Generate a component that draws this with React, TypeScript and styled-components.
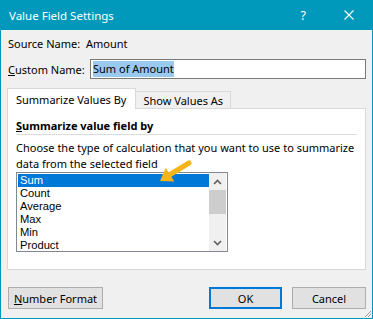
import React from 'react';
import styled, { createGlobalStyle } from 'styled-components';

const items = ['Sum', 'Count', 'Average', 'Max', 'Min', 'Product'];

export default function App() {
  return (
    <>
      <GlobalStyle />
      <Window>
        <TitleBar>
          <Title>Value Field Settings</Title>
          <TitleButtons>
            <TitleGlyph>?</TitleGlyph>
            <svg width="10" height="10" viewBox="0 0 10 10">
              <path d="M0.5 0.5L9.5 9.5M9.5 0.5L0.5 9.5" stroke="#fff" strokeWidth="1.1" />
            </svg>
          </TitleButtons>
        </TitleBar>

        <Body>
          <SourceRow>
            <Label>Source Name:</Label>
            <span>Amount</span>
          </SourceRow>

          <NameRow>
            <NameLabel>
              <u>C</u>ustom Name:
            </NameLabel>
            <NameInput>
              <Selected>Sum of Amount</Selected>
            </NameInput>
          </NameRow>

          <Tabs>
            <Tab active>Summarize Values By</Tab>
            <Tab>Show Values As</Tab>
          </Tabs>

          <Panel>
            <SectionTitle>
              <u>S</u>ummarize value field by
            </SectionTitle>
            <Hint>
              Choose the type of calculation that you want to use to summarize
              <br />
              data from the selected field
            </Hint>
            <ListBox>
              <Rows>
                {items.map((item, i) => (
                  <Row key={item} selected={i === 0}>
                    {item}
                  </Row>
                ))}
              </Rows>
              <ScrollBar>
                <ScrollArrow>
                  <svg width="9" height="6" viewBox="0 0 9 6">
                    <path d="M1 5L4.5 1.5L8 5" stroke="#606060" strokeWidth="1.6" fill="none" />
                  </svg>
                </ScrollArrow>
                <Thumb />
                <ScrollSpace />
                <ScrollArrow>
                  <svg width="9" height="6" viewBox="0 0 9 6">
                    <path d="M1 1L4.5 4.5L8 1" stroke="#606060" strokeWidth="1.6" fill="none" />
                  </svg>
                </ScrollArrow>
              </ScrollBar>
            </ListBox>
          </Panel>

          <Footer>
            <Button width={95}>
              <u>N</u>umber Format
            </Button>
            <RightButtons>
              <Button width={73} primary>
                OK
              </Button>
              <Button width={74}>Cancel</Button>
            </RightButtons>
          </Footer>
        </Body>

        {/* callout arrow pointing at "Sum" */}
        <Callout width="373" height="319" viewBox="0 0 373 319">
          <line x1="189" y1="163" x2="170" y2="174.5" stroke="#F5B417" strokeWidth="5" strokeLinecap="round" />
          <polygon points="160,181 165.7,167.8 174.3,181.4" fill="#F5B417" />
        </Callout>

        <Grip width="10" height="10" viewBox="0 0 10 10">
          <path d="M9 3L3 9M9 6L6 9" stroke="#A0A0A0" strokeWidth="1" />
        </Grip>
      </Window>
    </>
  );
}

const GlobalStyle = createGlobalStyle`
  body {
    margin: 0;
    font-family: 'Noto Sans', 'Open Sans', sans-serif;
    font-size: 11px;
    color: #000;
    white-space: nowrap;
  }
`;

const Window = styled.div`
  position: relative;
  width: 373px;
  height: 319px;
  box-sizing: border-box;
  border: 1px solid #0099bc;
  border-top: none;
  background: #f0f0f0;
  display: flex;
  flex-direction: column;
`;

const TitleBar = styled.div`
  height: 30px;
  margin: 0 -1px;
  background: #0099bc;
  color: #fff;
  display: flex;
  align-items: center;
  justify-content: space-between;
  padding: 0 19px 0 9px;
  flex-shrink: 0;
`;

const Title = styled.div`
  font-size: 11.5px;
`;

const TitleButtons = styled.div`
  display: flex;
  align-items: center;
  gap: 38px;
`;

const TitleGlyph = styled.span`
  font-size: 12.5px;
`;

const Body = styled.div`
  flex: 1;
  padding: 6px 6px 0 6px;
  display: flex;
  flex-direction: column;
`;

const SourceRow = styled.div`
  display: flex;
  height: 16px;
  line-height: 16px;
  padding-left: 1px;
`;

const Label = styled.span`
  width: 78px;
  flex-shrink: 0;
`;

const NameRow = styled.div`
  display: flex;
  align-items: center;
  margin-top: 7px;
  height: 20px;
  padding-left: 1px;
`;

const NameLabel = styled.span`
  width: 82px;
  flex-shrink: 0;
`;

const NameInput = styled.div`
  flex: 1;
  height: 20px;
  box-sizing: border-box;
  border: 1px solid #7a7a7a;
  background: #fff;
  display: flex;
  align-items: center;
  padding-left: 2px;
`;

const Selected = styled.span`
  background: #99c9ef;
  line-height: 16px;
`;

const Tabs = styled.div`
  display: flex;
  align-items: flex-end;
  margin-top: 9px;
  height: 21px;
  position: relative;
  z-index: 1;
`;

const Tab = styled.div<{ active?: boolean }>`
  box-sizing: border-box;
  height: ${(p) => (p.active ? 21 : 18)}px;
  border: 1px solid #d9d9d9;
  border-bottom: ${(p) => (p.active ? 'none' : '1px solid #d9d9d9')};
  border-left: ${(p) => (p.active ? '1px solid #d9d9d9' : 'none')};
  background: ${(p) => (p.active ? '#fff' : '#f0f0f0')};
  padding: ${(p) => (p.active ? '3px 9px 0 8px' : '1px 7px 0 7px')};
  line-height: 16px;
`;

const Panel = styled.div`
  margin-top: -1px;
  height: 162px;
  box-sizing: border-box;
  border: 1px solid #d9d9d9;
  background: #fff;
  padding: 9px 8px 0 8px;
`;

const SectionTitle = styled.div`
  font-weight: bold;
  line-height: 16px;
  border-bottom: 1px solid #dcdcdc;
`;

const Hint = styled.div`
  margin-top: 5px;
  line-height: 15.5px;
`;

const ListBox = styled.div`
  margin-top: 1px;
  width: 212px;
  height: 80px;
  box-sizing: border-box;
  border: 1px solid #828790;
  display: flex;
  padding: 1px;
`;

const Rows = styled.div`
  flex: 1;
`;

const Row = styled.div<{ selected?: boolean }>`
  height: 13px;
  line-height: 13px;
  padding-left: 2px;
  font-family: 'Liberation Sans', Arial, sans-serif;
  font-size: 11.2px;
  background: ${(p) => (p.selected ? '#0078d7' : 'transparent')};
  color: ${(p) => (p.selected ? '#fff' : '#000')};
`;

const ScrollBar = styled.div`
  width: 17px;
  flex-shrink: 0;
  background: #f0f0f0;
  display: flex;
  flex-direction: column;
  margin: -1px 0;
`;

const ScrollArrow = styled.div`
  height: 17px;
  display: flex;
  align-items: center;
  justify-content: center;
`;

const Thumb = styled.div`
  height: 24px;
  background: #cdcdcd;
`;

const ScrollSpace = styled.div`
  flex: 1;
`;

const Footer = styled.div`
  margin-top: 17px;
  display: flex;
  justify-content: space-between;
  padding-left: 1px;
`;

const RightButtons = styled.div`
  display: flex;
  gap: 10px;
`;

const Button = styled.div<{ width: number; primary?: boolean }>`
  width: ${(p) => p.width}px;
  height: 22px;
  box-sizing: border-box;
  border: ${(p) => (p.primary ? '2px solid #0078d7' : '1px solid #adadad')};
  background: #e1e1e1;
  display: flex;
  align-items: center;
  justify-content: center;
`;

const Callout = styled.svg`
  position: absolute;
  left: -1px;
  top: 0;
  pointer-events: none;
`;

const Grip = styled.svg`
  position: absolute;
  right: 0;
  bottom: 0;
`;
